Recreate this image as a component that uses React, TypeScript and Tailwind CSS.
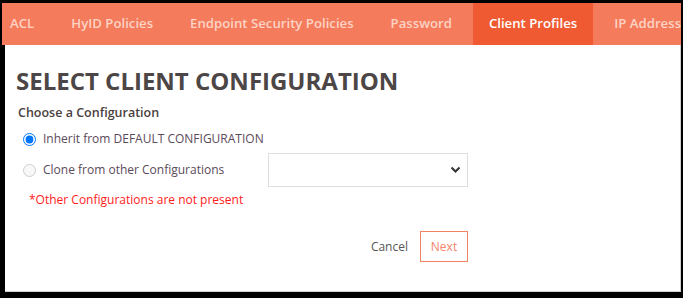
import { useState } from "react";

const tabs = [
  "ACL",
  "HyID Policies",
  "Endpoint Security Policies",
  "Password",
  "Client Profiles",
  "IP Address",
];

export default function App() {
  const [choice, setChoice] = useState("inherit");
  const active = "Client Profiles";

  return (
    <div
      className="h-[298px] w-[683px] overflow-hidden bg-black pt-[3px] pr-[2px] pb-[6px] pl-[2px]"
      style={{ fontFamily: '"Open Sans", "Liberation Sans", sans-serif' }}
    >
      <div className="flex h-full flex-col">
        <nav className="flex h-[42px] shrink-0 items-stretch gap-[5px] overflow-hidden bg-[#f47b5b] pl-[8px]">
          {tabs.map((t, i) => (
            <div
              key={t}
              className={`flex shrink-0 items-center whitespace-nowrap text-[13.2px] font-semibold ${
                i === 0 ? "pr-[16px]" : "px-[16px]"
              } ${
                t === active
                  ? "bg-[#f05a32] text-white"
                  : "text-[#fdd3c5]"
              }`}
            >
              {t}
            </div>
          ))}
        </nav>

        <div className="ml-[3px] flex-1 border-r border-b border-[#cfcfcf] bg-white pl-[13px]">
          <h1 className="mt-[20px] -ml-[2px] text-[24px] font-bold leading-[32px] text-[#4d4646]">
            SELECT CLIENT CONFIGURATION
          </h1>

          <p className="mt-[7px] text-[12.5px] font-semibold leading-[18px] text-[#4a4040]">
            Choose a Configuration
          </p>

          <label className="mt-[8px] flex h-[18px] items-center gap-[7px] pl-[5px]">
            <input
              type="radio"
              name="cfg"
              checked={choice === "inherit"}
              onChange={() => setChoice("inherit")}
              className="m-0 h-[13px] w-[13px]"
            />
            <span className="text-[12px] text-[#5a4a5a]">
              Inherit from DEFAULT CONFIGURATION
            </span>
          </label>

          <div className="mt-[5px] flex h-[34px] items-center">
            <label className="flex w-[250px] items-center gap-[7px] pl-[5px]">
              <input
                type="radio"
                name="cfg"
                disabled
                checked={choice === "clone"}
                onChange={() => setChoice("clone")}
                className="m-0 h-[13px] w-[13px]"
              />
              <span className="text-[12px] text-[#5a4a5a]">
                Clone from other Configurations
              </span>
            </label>
            <div className="relative h-[34px] w-[200px]">
              <select className="h-full w-full appearance-none border border-[#dedede] bg-white px-2 text-[12px] outline-none">
                <option value=""></option>
              </select>
              <svg
                className="pointer-events-none absolute top-[13px] right-[7px]"
                width="11"
                height="8"
                viewBox="0 0 11 8"
              >
                <path
                  d="M1.5 1.5 L5.5 5.5 L9.5 1.5"
                  fill="none"
                  stroke="#333"
                  strokeWidth="2"
                />
              </svg>
            </div>
          </div>

          <p className="mt-[4px] pl-[11px] text-[12px] leading-[18px] text-[#ff1a1a]">
            *Other Configurations are not present
          </p>

          <div className="mt-[22px] flex w-[450px] items-center justify-end gap-[12px]">
            <button className="text-[12px] text-[#555]">Cancel</button>
            <button className="h-[31px] w-[48px] border border-[#f08264] text-[12px] text-[#f4846a]">
              Next
            </button>
          </div>
        </div>
      </div>
    </div>
  );
}
